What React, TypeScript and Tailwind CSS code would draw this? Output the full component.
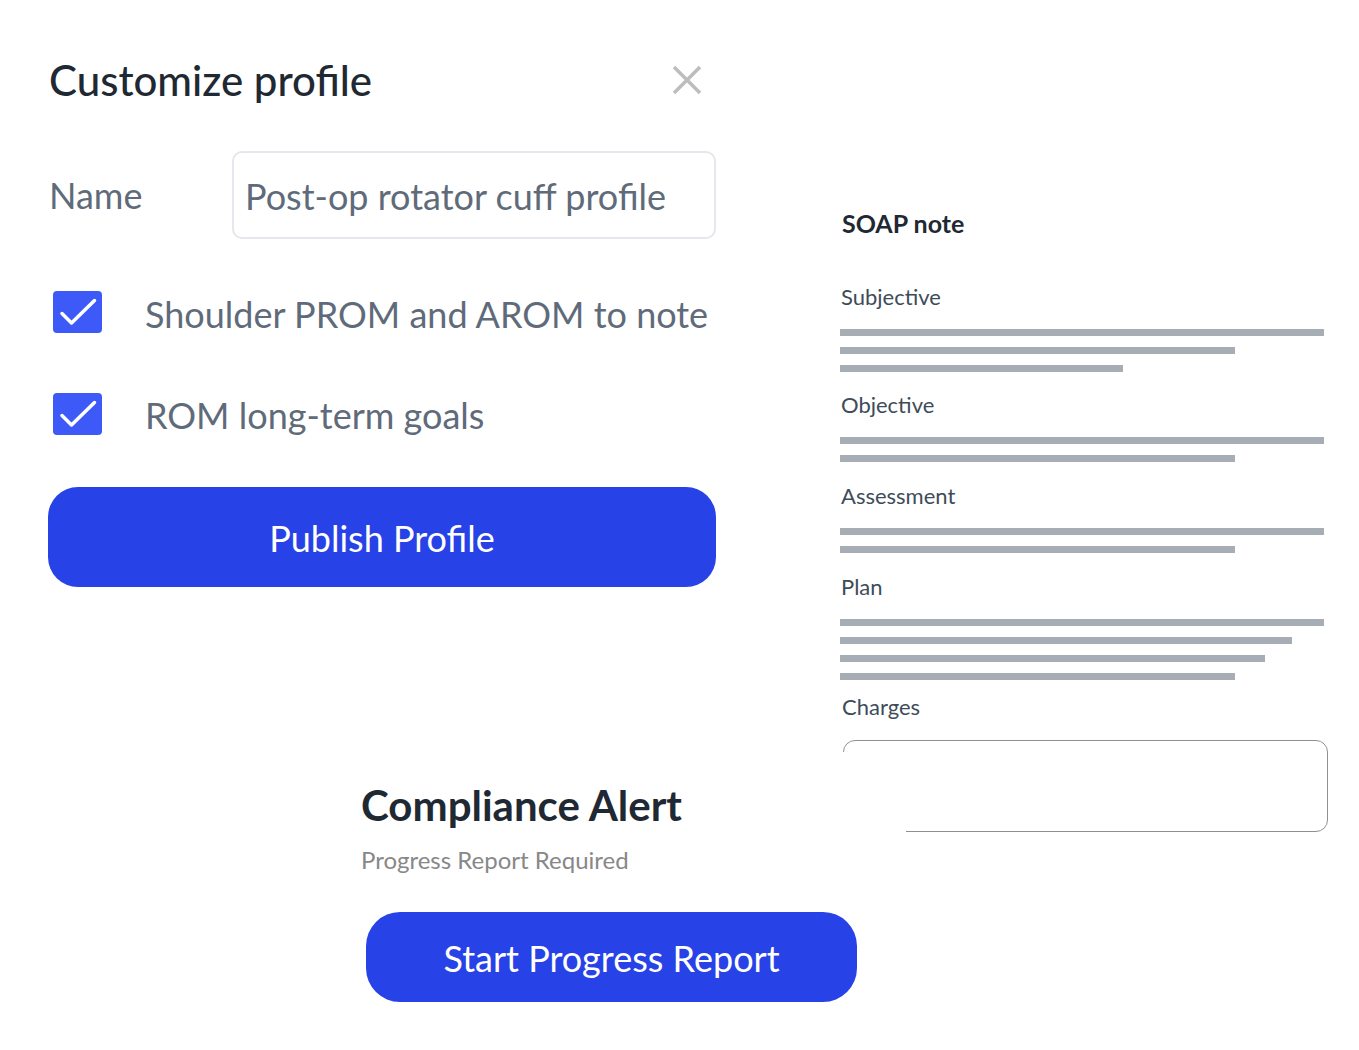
import React from "react";

const font = { fontFamily: "Lato, 'Noto Sans', sans-serif" };

function Check() {
  return (
    <div className="w-[49px] h-[42px] rounded-[4px] bg-[#3d5af9] shrink-0 flex items-center justify-center">
      <svg width="49" height="42" viewBox="0 0 49 42" fill="none">
        <path d="M9 22.5 L18.5 32 L41.5 9.5" stroke="white" strokeWidth="3.5" strokeLinecap="round" strokeLinejoin="round" />
      </svg>
    </div>
  );
}

function Bar({ w }: { w: string }) {
  return <div className={`h-[7px] bg-[#a6adb4] ${w}`} />;
}

export default function App() {
  return (
    <div className="relative w-[1359px] h-[1050px] bg-white overflow-hidden" style={font}>
      <div className="flex">
        {/* Left: customize profile */}
        <section className="ml-[48px] mt-[52px] w-[668px]">
          <div className="flex items-center justify-between h-[56px]">
            <h1 className="text-[42px] leading-none text-[#1f2933] font-medium pl-[1px]">Customize profile</h1>
            <svg className="mr-[14px]" width="30" height="30" viewBox="0 0 30 30">
              <path d="M2 2 L28 28 M28 2 L2 28" stroke="#bdbdbd" strokeWidth="3.5" />
            </svg>
          </div>
          <div className="flex items-center mt-[43px]">
            <span className="w-[184px] pl-[1px] text-[36px] leading-none text-[#5f6b7a]">Name</span>
            <div className="flex-1 h-[88px] rounded-[10px] border-2 border-[#e4e7eb] flex items-center pl-[11px] pt-[2px] text-[36px] leading-none text-[#5f6b7a]">
              Post-op rotator cuff profile
            </div>
          </div>
          <div className="flex items-center mt-[52px] pl-[5px]">
            <Check />
            <span className="ml-[43px] pt-[3px] text-[36px] leading-none text-[#5f6b7a]">Shoulder PROM and AROM to note</span>
          </div>
          <div className="flex items-center mt-[60px] pl-[5px]">
            <Check />
            <span className="ml-[43px] pt-[2px] text-[36px] leading-none text-[#5f6b7a]">ROM long-term goals</span>
          </div>
          <button className="mt-[52px] w-full h-[100px] rounded-[30px] bg-[#2742e6] text-white text-[36px] leading-none flex items-center justify-center pt-[2px]">
            Publish Profile
          </button>
        </section>

        {/* Right: SOAP note */}
        <section className="ml-[124px] mt-[208px] w-[488px]">
          <h2 className="text-[25px] leading-[30px] font-bold text-[#1f2933] pl-[2px]">SOAP note</h2>
          <div className="mt-[46px] text-[22px] leading-[26px] text-[#3e4c59] pl-[1px]">Subjective</div>
          <div className="mt-[19px] flex flex-col gap-[11px] w-[484px]">
            <Bar w="w-[484px]" />
            <Bar w="w-[395px]" />
            <Bar w="w-[283px]" />
          </div>
          <div className="mt-[20px] text-[22px] leading-[26px] text-[#3e4c59] pl-[1px]">Objective</div>
          <div className="mt-[19px] flex flex-col gap-[11px]">
            <Bar w="w-[484px]" />
            <Bar w="w-[395px]" />
          </div>
          <div className="mt-[21px] text-[22px] leading-[26px] text-[#3e4c59] pl-[1px]">Assessment</div>
          <div className="mt-[19px] flex flex-col gap-[11px]">
            <Bar w="w-[484px]" />
            <Bar w="w-[395px]" />
          </div>
          <div className="mt-[21px] text-[22px] leading-[26px] text-[#3e4c59] pl-[1px]">Plan</div>
          <div className="mt-[19px] flex flex-col gap-[11px]">
            <Bar w="w-[484px]" />
            <Bar w="w-[452px]" />
            <Bar w="w-[425px]" />
            <Bar w="w-[395px]" />
          </div>
          <div className="mt-[14px] text-[22px] leading-[26px] text-[#3e4c59] pl-[2px]">Charges</div>
          <div className="mt-[20px] ml-[3px] w-[485px] h-[92px] rounded-[12px] border-[1.5px] border-[#8d9196]" />
        </section>
      </div>

      {/* Compliance alert card overlaying the charges box */}
      <section className="absolute left-[335px] top-[752px] w-[571px] h-[290px] bg-white pl-[26px] pt-[32px]">
        <h2 className="text-[42px] leading-none font-bold text-[#1f2933]">Compliance Alert</h2>
        <p className="mt-[22px] text-[24px] leading-none text-[#888888]">Progress Report Required</p>
        <button className="mt-[40px] ml-[5px] w-[491px] h-[90px] rounded-[34px] bg-[#2742e6] text-white text-[36px] leading-none flex items-center justify-center pt-[2px]">
          Start Progress Report
        </button>
      </section>
    </div>
  );
}
